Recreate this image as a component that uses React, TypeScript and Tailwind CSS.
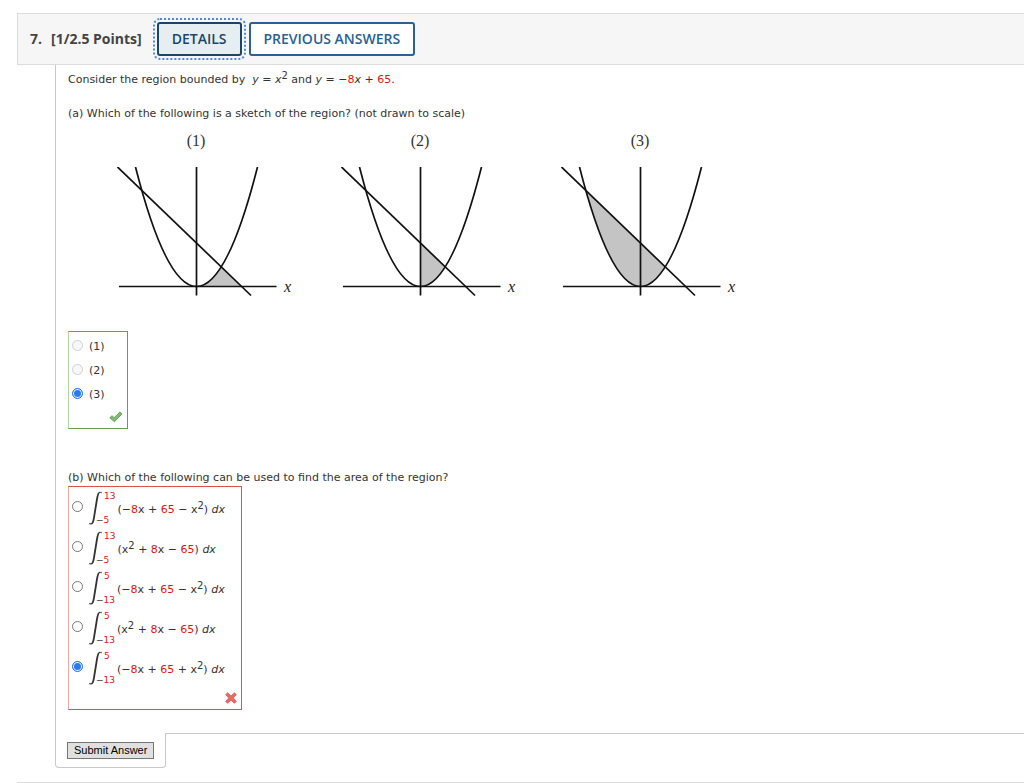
import { useState } from "react";
import type { ReactNode } from "react";

type Region = "right" | "middle" | "full";

const SKETCHES: { id: string; label: string; region: Region }[] = [
  { id: "1", label: "(1)", region: "right" },
  { id: "2", label: "(2)", region: "middle" },
  { id: "3", label: "(3)", region: "full" },
];

/* Shaded areas, in the same coordinates as the curves */
const REGION_PATHS: Record<Region, string> = {
  right: "M79.5 119.5 Q91.9 119.5 104.3 99.8 L124.8 119.5 Z",
  middle: "M79.5 76 L104.3 99.8 Q91.9 119.5 79.5 119.5 Z",
  full: "M24.7 23.5 L104.3 99.8 Q91.9 119.5 79.5 119.5 Q52.1 119.5 24.7 23.5 Z",
};

function Red({ children }: { children: ReactNode }) {
  return <span className="text-[#d9170f]">{children}</span>;
}

function Squared({ italic = false }: { italic?: boolean }) {
  return (
    <>
      <span className={italic ? "italic" : ""}>x</span>
      <sup className="top-0 align-[4px] text-[10px] leading-none">2</sup>
    </>
  );
}

const INTEGRALS: { id: string; upper: string; lower: string; body: ReactNode }[] = [
  {
    id: "a",
    upper: "13",
    lower: "5",
    body: <>(−<Red>8</Red>x + <Red>65</Red> − <Squared />)</>,
  },
  {
    id: "b",
    upper: "13",
    lower: "5",
    body: <>(<Squared /> + <Red>8</Red>x − <Red>65</Red>)</>,
  },
  {
    id: "c",
    upper: "5",
    lower: "13",
    body: <>(−<Red>8</Red>x + <Red>65</Red> − <Squared />)</>,
  },
  {
    id: "d",
    upper: "5",
    lower: "13",
    body: <>(<Squared /> + <Red>8</Red>x − <Red>65</Red>)</>,
  },
  {
    id: "e",
    upper: "5",
    lower: "13",
    body: <>(−<Red>8</Red>x + <Red>65</Red> + <Squared />)</>,
  },
];

function Sketch({ label, region }: { label: string; region: Region }) {
  return (
    <figure className="w-[180px]">
      <figcaption className="w-[158px] pb-4 text-center font-['Liberation_Serif',serif] text-[16px] leading-5">
        {label}
      </figcaption>
      <svg viewBox="0 0 180 132" className="block h-[132px] w-[180px]" role="img" aria-label={`Sketch ${label}`}>
        <path d={REGION_PATHS[region]} fill="#c4c4c4" />
        <g fill="none" stroke="#111" strokeWidth="1.7">
          <path d="M79.5 0 V128.5" />
          <path d="M2 119.5 H159.5" />
          <path d="M0.5 0 L134 128.5" />
          <path d="M18.5 0 Q79.5 239 140.5 0" />
        </g>
        <text x="167" y="125" fontSize="16" fontStyle="italic" fontFamily="Liberation Serif, serif" fill="#222">
          x
        </text>
      </svg>
    </figure>
  );
}

function IntegralSign() {
  return (
    <svg viewBox="0 0 13 34" className="h-[34px] w-[13px] shrink-0" aria-hidden="true">
      <path
        d="M12.8 1.6 C12.2 .6 10.6 .4 9.4 1.4 C8.2 2.4 7.7 4.6 7.1 8 L4.5 24 C3.9 28.4 3.3 31.2 2.4 32 C1.7 32.6 1 32.3 .4 31.8 L.2 32.9 C1.4 33.8 3 33.6 4 32.5 C5 31.4 5.5 29 6.1 25.4 L8.7 9.4 C9.4 4.8 9.9 2.7 10.8 2 C11.4 1.6 12.1 1.9 12.6 2.5 Z"
        fill="#333"
      />
    </svg>
  );
}

function CorrectMark() {
  return (
    <svg viewBox="0 0 14 12" className="h-3 w-3.5" role="img" aria-label="Correct">
      <path
        d="M.8 6.8 L3 4.7 L5.2 6.7 L10.8 1 L13 2.8 L5.4 10.8 Z"
        fill="#82b974"
        stroke="#5f9e50"
        strokeWidth=".9"
        strokeLinejoin="round"
      />
    </svg>
  );
}

function WrongMark() {
  return (
    <svg viewBox="0 0 12 12" className="size-3" role="img" aria-label="Incorrect">
      <path
        d="M2.6 .8 L6 4 L9.4 .8 L11.3 2.7 L8.2 6 L11.3 9.4 L9.4 11.3 L6 8.2 L2.6 11.3 L.7 9.4 L3.8 6 L.7 2.7 Z"
        fill="#ea6a68"
        stroke="#dc5652"
        strokeWidth=".8"
        strokeLinejoin="round"
      />
    </svg>
  );
}

const radioClass =
  "m-0 size-[11px] shrink-0 appearance-none rounded-full border border-[#767676] bg-white checked:border-[#2b78f5] checked:bg-[#2b78f5] checked:shadow-[inset_0_0_0_1px_#fff] disabled:border-[#d0d0d0] disabled:bg-[#f8f8f8]";

export default function App() {
  const [sketch] = useState("3");
  const [integral, setIntegral] = useState("e");

  return (
    <main className="bg-white pt-[13px] pl-[17px] font-['DejaVu_Sans',Verdana,sans-serif] text-[11px] leading-4 text-[#333]">
      {/* Question header */}
      <header className="flex h-[52px] items-center border border-r-0 border-[#dcdcdc] bg-[#f6f6f6] pl-3 font-['Open_Sans',sans-serif] text-[14px]">
        <h1 className="mr-[15px] flex gap-[9px] font-bold text-[#444]">
          <span>7.</span>
          <span>[1/2.5 Points]</span>
        </h1>
        <button
          type="button"
          className="mr-[7px] h-[34px] rounded-[3px] border-2 border-[#1a4769] bg-[#e7eef2] px-[13px] font-semibold text-[#1a4769] outline-2 outline-offset-2 outline-dotted outline-[#4b8ae0]"
        >
          DETAILS
        </button>
        <button
          type="button"
          className="h-[34px] rounded-[3px] border-2 border-[#286192] bg-white px-[13px] font-semibold text-[#286192]"
        >
          PREVIOUS ANSWERS
        </button>
      </header>

      {/* Question body */}
      <section className="ml-[38px] border-l border-[#c8c8c8] pt-1.5 pb-[23px] pl-3">
        <p>
          Consider the region bounded by&nbsp; <i>y</i> = <Squared italic /> and <i>y</i> = −<Red>8</Red>
          <i>x</i> + <Red>65</Red>.
        </p>

        <p className="mt-[18px]">(a) Which of the following is a sketch of the region? (not drawn to scale)</p>

        <div className="mt-[9px] ml-[49px] grid grid-cols-[224px_220px_180px]">
          {SKETCHES.map((s) => (
            <Sketch key={s.id} label={s.label} region={s.region} />
          ))}
        </div>

        <fieldset
          aria-label="Sketch of the region"
          className="mt-8 flex w-[60px] flex-col border border-[#6a9e45] border-l-[#b5d3a0] pt-[3px] pr-1 pb-[5px] pl-[3px]"
        >
          {SKETCHES.map((s) => (
            <label key={s.id} className="flex h-6 items-center gap-1.5">
              <input
                type="radio"
                name="sketch"
                value={s.id}
                checked={sketch === s.id}
                disabled={sketch !== s.id}
                readOnly
                className={`${radioClass} mb-[3px]`}
              />
              {s.label}
            </label>
          ))}
          <div className="flex h-4 items-end justify-end">
            <CorrectMark />
          </div>
        </fieldset>

        <p className="mt-[41px]">(b) Which of the following can be used to find the area of the region?</p>

        <fieldset
          aria-label="Integral for the area"
          className="flex w-[174px] flex-col border border-[#d9534a] border-l-[#f0a8a3] pt-px pr-1 pb-[5px] pl-[3px]"
        >
          {INTEGRALS.map((it) => (
            <label key={it.id} className="flex h-10 items-center">
              <input
                type="radio"
                name="integral"
                value={it.id}
                checked={integral === it.id}
                onChange={() => setIntegral(it.id)}
                className={`${radioClass} mb-[3px]`}
              />
              <span className="ml-1.5 flex items-center">
                <IntegralSign />
                <span className="-ml-1.5 flex flex-col text-[9px] leading-3 whitespace-nowrap">
                  <span className="pb-3 pl-2">
                    <Red>{it.upper}</Red>
                  </span>
                  <span>
                    −<Red>{it.lower}</Red>
                  </span>
                </span>
                <span className="pt-0.5 pl-0.5 whitespace-nowrap">
                  {it.body} <i>dx</i>
                </span>
              </span>
            </label>
          ))}
          <div className="flex h-4 items-end justify-end">
            <WrongMark />
          </div>
        </fieldset>
      </section>

      {/* Submit tab */}
      <footer className="flex items-start border-b border-[#dcdcdc] pb-3.5 pl-[38px]">
        <div className="rounded-b border-r border-b border-l border-[#c8c8c8] px-[11px] pt-[9px] pb-2">
          <button
            type="button"
            className="block h-[17px] border border-[#767676] bg-[#e0e0e0] px-1.5 font-['Liberation_Sans',sans-serif] text-[11px] leading-[15px] text-black"
          >
            Submit Answer
          </button>
        </div>
        <div className="flex-1 border-t border-[#c8c8c8]" />
      </footer>
    </main>
  );
}
